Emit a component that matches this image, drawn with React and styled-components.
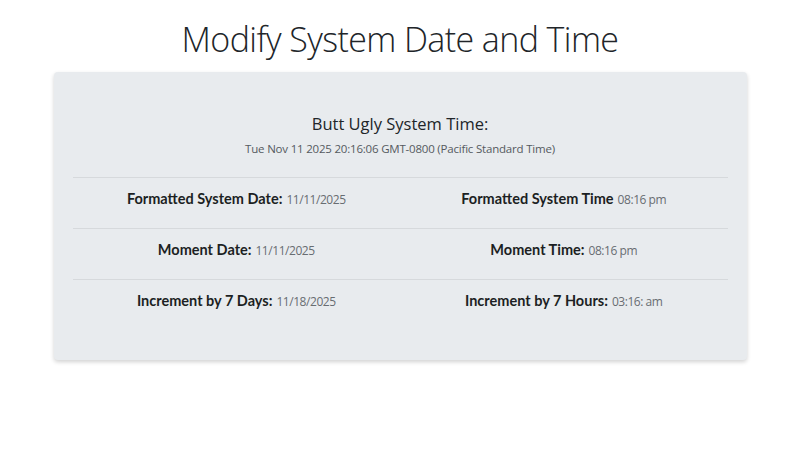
import React from "react";
import styled, { createGlobalStyle } from "styled-components";

const GlobalStyle = createGlobalStyle`
  body {
    margin: 0;
    background: #fff;
    font-family: "Open Sans", "Liberation Sans", sans-serif;
    color: #212529;
  }
`;

const rows = [
  [
    { label: "Formatted System Date:", value: "11/11/2025" },
    { label: "Formatted System Time", value: "08:16 pm" },
  ],
  [
    { label: "Moment Date:", value: "11/11/2025" },
    { label: "Moment Time:", value: "08:16 pm" },
  ],
  [
    { label: "Increment by 7 Days:", value: "11/18/2025" },
    { label: "Increment by 7 Hours:", value: "03:16: am" },
  ],
];

const App = () => {
  return (
    <Page>
      <GlobalStyle />
      <Title>Modify System Date and Time</Title>
      <Card>
        <Header>
          <Heading>Butt Ugly System Time:</Heading>
          <Raw>Tue Nov 11 2025 20:16:06 GMT-0800 (Pacific Standard Time)</Raw>
        </Header>
        {rows.map((row, i) => (
          <Row key={i}>
            {row.map((cell) => (
              <Cell key={cell.label}>
                <Label>{cell.label}</Label> <Value>{cell.value}</Value>
              </Cell>
            ))}
          </Row>
        ))}
      </Card>
    </Page>
  );
};

const Page = styled.div`
  width: 800px;
  height: 450px;
  display: flex;
  flex-direction: column;
  align-items: center;
`;

const Title = styled.h1`
  margin: 14px 0 0 0;
  height: 58px;
  font-family: "Open Sans", "Liberation Sans", sans-serif;
  font-weight: 300;
  font-size: 34px;
  line-height: 50px;
  color: #212529;
  letter-spacing: -0.6px;
`;

const Card = styled.div`
  box-sizing: border-box;
  width: 693px;
  height: 288px;
  padding: 39px 19px 0 19px;
  background-color: #e8ebee;
  border-radius: 4px;
  box-shadow: 0 2px 4px rgba(0, 0, 0, 0.18);
`;

const Header = styled.div`
  height: 66px;
  text-align: center;
`;

const Heading = styled.div`
  font-family: "Open Sans", "Liberation Sans", sans-serif;
  font-size: 16.5px;
  line-height: 26px;
  color: #212529;
`;

const Raw = styled.div`
  margin-top: 4px;
  font-family: "Open Sans", "Liberation Sans", sans-serif;
  font-size: 11.5px;
  line-height: 16px;
  letter-spacing: -0.2px;
  color: #555a60;
`;

const Row = styled.div`
  display: grid;
  grid-template-columns: 1fr 1fr;
  height: 51px;
  border-top: 1px solid #d6d9dc;
  box-sizing: border-box;
`;

const Cell = styled.div`
  display: flex;
  align-items: baseline;
  justify-content: center;
  gap: 4px;
  padding-top: 12px;
`;

const Label = styled.span`
  font-family: "Lato", "Liberation Sans", sans-serif;
  font-weight: 700;
  font-size: 14.5px;
  color: #1c1f23;
`;

const Value = styled.span`
  font-family: "Open Sans", "Liberation Sans", sans-serif;
  font-weight: 400;
  font-size: 12px;
  letter-spacing: -0.45px;
  color: #686d72;
`;

export default App;
